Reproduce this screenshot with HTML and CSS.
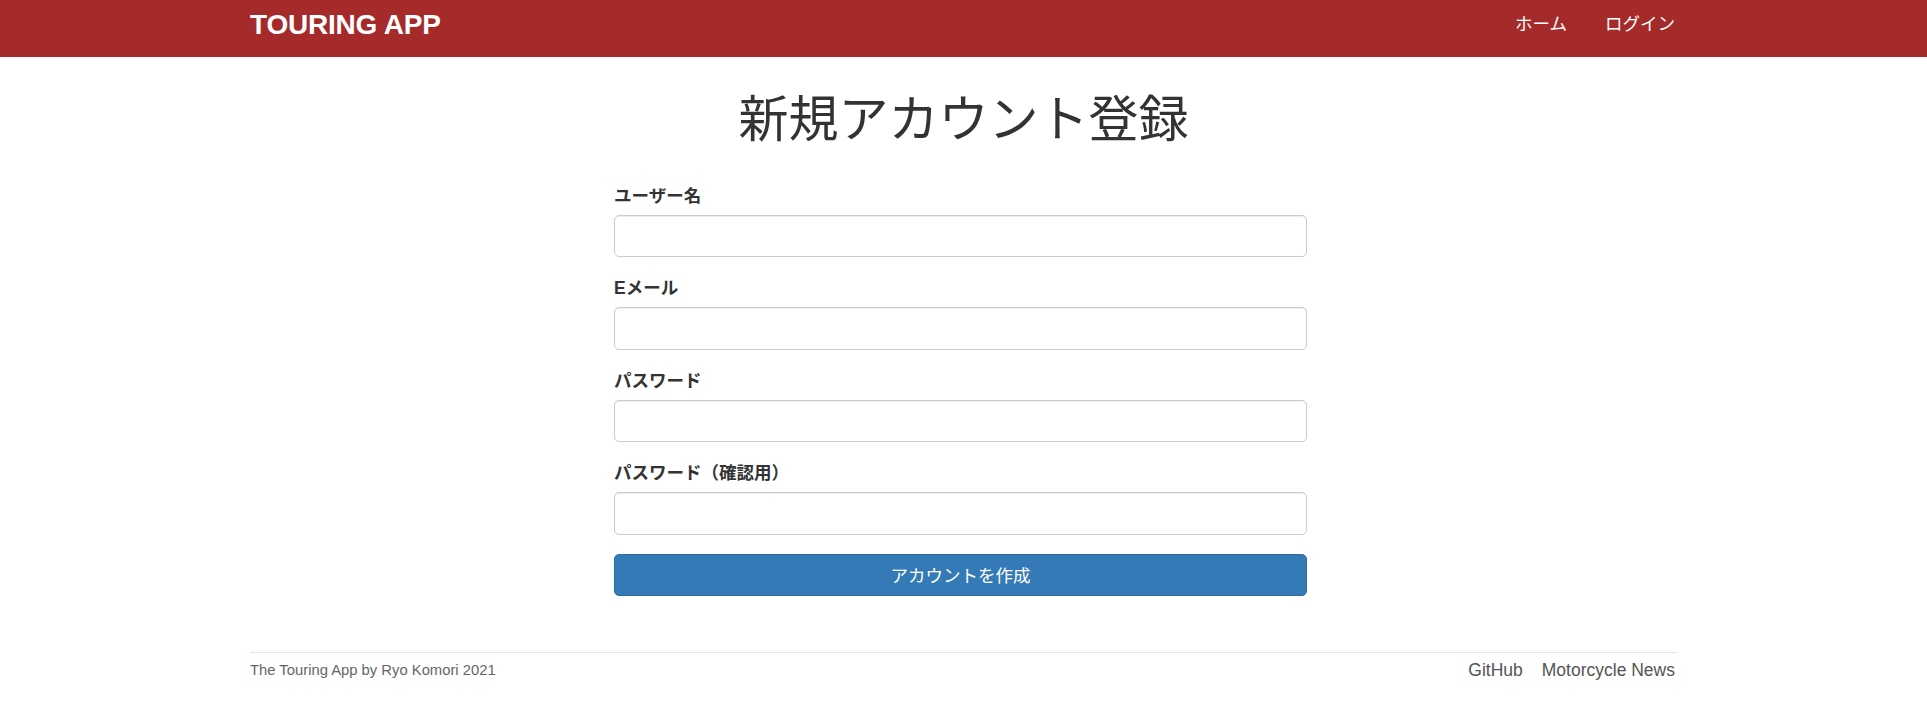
FILE: index.html
```html
<!DOCTYPE html>
<html lang="ja">
<head>
    <meta charset="UTF-8">
    <meta name="viewport" content="width=device-width, initial-scale=1.0">
    <title>Touring App</title>
    <link rel="stylesheet" href="styles.css">
</head>
<body>
    <nav class="navbar">
        <div class="container navbar-inner">
            <a class="brand" href="#">TOURING APP</a>
            <ul class="nav-links">
                <li><a href="#">ホーム</a></li>
                <li><a href="#">ログイン</a></li>
            </ul>
        </div>
    </nav>

    <div class="container">
        <h1 class="page-title">新規アカウント登録</h1>

        <form class="signup-form">
            <div class="form-group">
                <label for="name">ユーザー名</label>
                <input type="text" id="name" class="form-control">
            </div>
            <div class="form-group">
                <label for="email">Eメール</label>
                <input type="email" id="email" class="form-control">
            </div>
            <div class="form-group">
                <label for="password">パスワード</label>
                <input type="password" id="password" class="form-control">
            </div>
            <div class="form-group">
                <label for="password_confirmation">パスワード（確認用）</label>
                <input type="password" id="password_confirmation" class="form-control">
            </div>
            <button type="submit" class="btn-submit">アカウントを作成</button>
        </form>

        <footer class="footer">
            <small>The Touring App by Ryo Komori 2021</small>
            <ul class="footer-links">
                <li><a href="#">GitHub</a></li>
                <li><a href="#">Motorcycle News</a></li>
            </ul>
        </footer>
    </div>
</body>
</html>
```

FILE: styles.css
```css
body {
    font-family: "Liberation Sans", "Noto Sans CJK JP", sans-serif;
    font-size: 17.5px;
    line-height: 25px;
    color: #333;
    background-color: #fff;
    margin: 0;
    padding: 0;
}

a {
    text-decoration: none;
}

ul {
    list-style: none;
    margin: 0;
    padding: 0;
}

.container {
    width: 1427px;
    margin: 0 auto;
}

.navbar {
    background-color: #a52a2a;
    height: 57px;
}

.navbar-inner {
    display: flex;
    justify-content: space-between;
    align-items: flex-start;
}

.brand {
    color: #fff;
    font-size: 28px;
    font-weight: bold;
    letter-spacing: -0.2px;
    line-height: 50px;
}

.nav-links {
    display: flex;
    gap: 38px;
    margin-right: 2px;
}

.nav-links a {
    color: #fff;
    line-height: 49px;
}

.page-title {
    font-size: 50px;
    font-weight: normal;
    line-height: 55px;
    text-align: center;
    margin: 36px 0 35.5px;
}

.signup-form {
    width: 693px;
    margin-left: 364px;
}

.form-group {
    margin-bottom: 19px;
}

.form-group label {
    display: block;
    font-weight: bold;
    margin-bottom: 6px;
}

.form-control {
    display: block;
    box-sizing: border-box;
    width: 100%;
    height: 42.5px;
    padding: 7.5px 15px;
    font-size: 17.5px;
    border: 1px solid #ccc;
    border-radius: 5px;
    box-shadow: inset 0 1px 1px rgba(0, 0, 0, 0.075);
    background-color: #fff;
}

.btn-submit {
    display: block;
    width: 100%;
    height: 42.5px;
    font-family: inherit;
    font-size: 17.5px;
    color: #fff;
    background-color: #337ab7;
    border: 1px solid #2e6da4;
    border-radius: 5px;
    cursor: pointer;
}

.footer {
    display: flex;
    justify-content: space-between;
    align-items: center;
    margin-top: 56px;
    padding-top: 5px;
    border-top: 1px solid #e5e5e5;
}

.footer small {
    font-size: 14.8px;
    color: #666;
}

.footer-links {
    display: flex;
    gap: 19px;
    margin-right: 2px;
}

.footer-links a {
    color: #555;
}
```
